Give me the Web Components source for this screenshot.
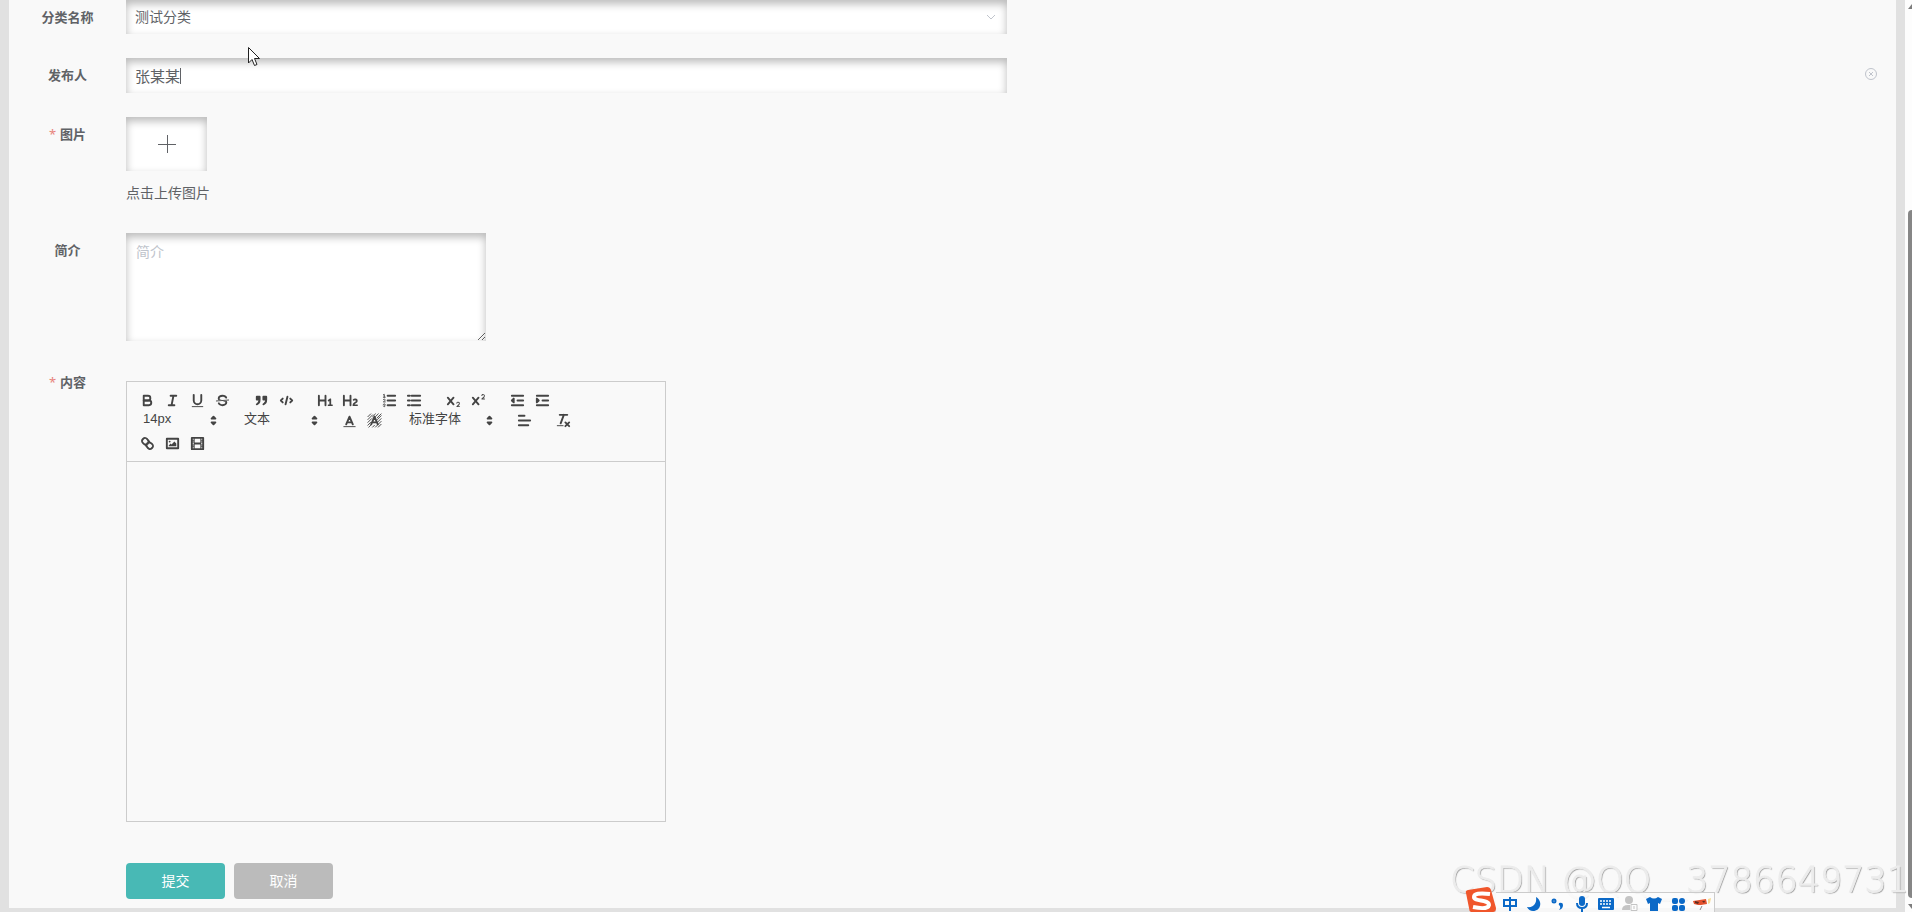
<!DOCTYPE html>
<html lang="zh-CN">
<head>
<meta charset="utf-8">
<title>发布</title>
<style>
	body{
		margin: 0;
		background: #e1e1e1;
		color: #606266;
		font: 14px/20px "Noto Sans", "Noto Sans CJK SC", sans-serif;
		overflow: hidden;
	}
</style>
</head>
<body>

<app-page>
	<select-row label="分类名称" value="测试分类"></select-row>
	<text-row label="发布人" value="张某某"></text-row>
	<upload-row label="图片" required tip="点击上传图片"></upload-row>
	<area-row label="简介"></area-row>
	<editor-row label="内容" required></editor-row>
	<form-actions>
		<action-button kind="primary">提交</action-button>
		<action-button>取消</action-button>
	</form-actions>
</app-page>

<water-mark>CSDN @QQ__3786649731</water-mark>
<ime-bar></ime-bar>
<mouse-pointer></mouse-pointer>

<script>

const box = `
	.box{
		box-sizing: border-box;
		border: 0;
		border-radius: 0;
		outline: 0;
		background-color: #fff;
		box-shadow: inset 0 4px 8px rgba(0,0,0,.28);
		color: #606266;
		font: inherit;
	}
`

class AppPage extends HTMLElement {

	constructor(){

		super()

		this.attachShadow({mode: 'open'}).innerHTML = `
			<style>
				:host{
					display: flex;
					min-height: 100vh;
				}
				main{
					flex: 1;
					margin: 0 9px 4px;
					padding-bottom: 9px;
					background: #f9f9f9;
				}
				form{
					display: flex;
					flex-direction: column;
					gap: 24px;
				}
			</style>
			<main><form><slot></slot></form></main>
			<scroll-rail></scroll-rail>
		`

	}

}

class ScrollRail extends HTMLElement {

	constructor(){

		super()

		this.attachShadow({mode: 'open'}).innerHTML = `
			<style>
				:host{
					display: flex;
					flex-direction: column;
					width: 7px;
					height: 100vh;
					overflow: hidden;
					background: #fdfdfd;
				}
				svg{
					display: block;
					flex: none;
					width: 14px;
					height: 14px;
					fill: #7d7d7d;
				}
				i{
					flex: 0 1 688px;
					margin: auto 0 0 3px;
					width: 8px;
					border-radius: 4px;
					background: #868686;
				}
			</style>
			<svg viewBox="0 0 14 14"><path d="M3 9L7 4L11 9Z"/></svg>
			<i></i>
			<svg viewBox="0 0 14 14"><path d="M3 6L7 11L11 6Z"/></svg>
		`

	}

}

// label on the left, the control of the subclass on the right
class FormRow extends HTMLElement {

	constructor(){

		super()

		this.shadow = this.attachShadow({mode: 'open'})

	}

	connectedCallback(){

		this.shadow.innerHTML = `
			<style>
				:host{
					display: flex;
					align-items: flex-start;
				}
				.name{
					flex: none;
					width: 117px;
					text-align: center;
					font-size: 13px;
					font-weight: 700;
					line-height: 34px;
				}
				.name b{
					margin-right: 4px;
					color: #e8837c;
					font-weight: 400;
				}
				${box}
				${this.css()}
			</style>
			<label class="name" for="control">${this.hasAttribute('required') ? '<b>*</b>' : ''}${this.getAttribute('label')}</label>
			${this.control()}
		`

	}

	css(){

		return ''

	}

	control(){

		return ''

	}

}

class SelectRow extends FormRow {

	css(){

		return `
			.wrap{
				display: grid;
				width: 881px;
				max-width: calc(100% - 117px);
				align-items: center;
			}
			select, svg{
				grid-area: 1 / 1;
			}
			select{
				appearance: none;
				width: 100%;
				height: 34px;
				padding: 0 30px 0 9px;
			}
			svg{
				justify-self: end;
				margin-right: 10px;
				width: 12px;
				height: 12px;
				fill: none;
				stroke: #c0c4cc;
				pointer-events: none;
			}
		`

	}

	control(){

		return `
			<div class="wrap">
				<select class="box" id="control"><option>${this.getAttribute('value')}</option></select>
				<svg viewBox="0 0 12 12"><path d="M2 4L6 8L10 4"/></svg>
			</div>
		`

	}

}

class TextRow extends FormRow {

	css(){

		return `
			input.box{
				width: 881px;
				height: 35px;
				padding: 0 9px;
				background: #fff linear-gradient(#606266, #606266) 54px 10px / 1px 16px no-repeat;
				font-size: 15px;
			}
			button{
				margin: 9px 18px 0 auto;
				padding: 0;
				border: 0;
				background: none;
			}
			svg{
				display: block;
				width: 14px;
				height: 14px;
				fill: none;
				stroke: #c0c4cc;
			}
		`

	}

	control(){

		return `
			<input class="box" id="control" type="text" value="${this.getAttribute('value')}">
			<button type="button" aria-label="清空">
				<svg viewBox="0 0 14 14"><circle cx="7" cy="7" r="5.5"/><path d="M5 5L9 9M9 5L5 9"/></svg>
			</button>
		`

	}

}

class UploadRow extends FormRow {

	css(){

		return `
			button{
				display: grid;
				place-items: center;
				width: 81px;
				height: 54px;
				padding: 0;
			}
			svg{
				width: 18px;
				height: 18px;
				stroke: #606266;
			}
			p{
				margin: 6px 0 0;
				line-height: 32px;
			}
		`

	}

	control(){

		return `
			<div>
				<button class="box" id="control" type="button">
					<svg viewBox="0 0 18 18"><path d="M9.500 0V18M0 9.500H18"/></svg>
				</button>
				<p>${this.getAttribute('tip')}</p>
			</div>
		`

	}

}

class AreaRow extends FormRow {

	css(){

		return `
			textarea{
				width: 360px;
				height: 108px;
				padding: 9px 10px;
				resize: both;
			}
			textarea::placeholder{
				color: #c0c4cc;
			}
		`

	}

	control(){

		return `<textarea class="box" id="control" placeholder="${this.getAttribute('label')}"></textarea>`

	}

}

const two = 'M15.5,15H13.861a3.858,3.858,0,0,0,1.914-2.975,1.8,1.8,0,0,0-1.6-1.751A1.921,1.921,0,0,0,12.021,11.7a0.5,0.5,0,1,0,.957.291h0a0.914,0.914,0,0,1,1.053-.725,0.81,0.81,0,0,1,.744.762c0,1.076-1.17,1.87-1.94,2.431A1.456,1.456,0,0,0,12,15.5a0.5,0.5,0,0,0,.5.5h3A0.5,0.5,0,0,0,15.500,15Z'

const cross = 'M9.65,5.241a1,1,0,0,0-1.409.108L6,7.964,3.759,5.349A1,1,0,0,0,2.192,6.592Q2.215,6.621,2.241,6.649L4.684,9.5,2.241,12.35A1,1,0,0,0,3.71,13.707q0.026-.028.049-0.057L6,11.036,8.241,13.65a1,1,0,1,0,1.567-1.243Q9.785,12.378,9.759,12.35L7.316,9.5,9.759,6.651A1,1,0,0,0,9.65,5.241Z'

const icons = {
	bold: '<path d="M5,4H9.500A2.500,2.500,0,0,1,9.500,9H5Z"/><path d="M5,9h5.500A2.500,2.500,0,0,1,10.500,14H5Z"/>',
	italic: '<path d="M7,4H13M5,14H11M8,14L10,4"/>',
	underline: '<path d="M5,3V9a4,4,0,0,0,8,0V3"/><rect class="f" x="3" y="15" width="12" height="1"/>',
	strike: '<path class="t" d="M15.500,8.500L2.500,9.500"/><path class="f" d="M9.007,8C6.542,7.791,6,7.519,6,6.5,6,5.792,7.283,5,9,5c1.571,0,2.765.679,2.969,1.309a1,1,0,0,0,1.9-.617C13.356,4.106,11.354,3,9,3,6.2,3,4,4.538,4,6.5a3.2,3.2,0,0,0,.5,1.843Z"/><path class="f" d="M8.984,10C11.457,10.208,12,10.479,12,11.5c0,0.708-1.283,1.5-3,1.5-1.571,0-2.765-.679-2.969-1.309a1,1,0,1,0-1.9.617C4.644,13.894,6.646,15,9,15c2.8,0,5-1.538,5-3.5a3.2,3.2,0,0,0-.5-1.843Z"/>',
	quote: '<path class="s" d="M4,5H7V8H4ZM11,5H14V8H11ZM7,8c0,4.031-3,5-3,5M14,8c0,4.031-3,5-3,5"/>',
	code: '<path d="M5,7L3,9L5,11M13,7L15,9L13,11M10,5L8,13"/>',
	h1: '<path class="f" d="M10,4V14a1,1,0,0,1-2,0V10H3v4a1,1,0,0,1-2,0V4A1,1,0,0,1,3,4V8H8V4a1,1,0,0,1,2,0Zm6.068,9.209H14.99V7.599a.541.541,0,0,0-.605-.605h-.627a1.011,1.011,0,0,0-.748.297L11.645,8.566a.544.544,0,0,0-.022.858l.286.308a.539.539,0,0,0,.847.033l.099-.088a1.214,1.214,0,0,0,.242-.353h.022s-.011.309-.011.605V13.209H12.041a.541.541,0,0,0-.605.605v.439a.541.541,0,0,0,.605.605h4.027a.541.541,0,0,0,.605-.605v-.439A.541.541,0,0,0,16.068,13.209Z"/>',
	h2: '<path class="f" d="M16.740,13.814v.439a.541.541,0,0,1-.605.605H11.855a.584.584,0,0,1-.649-.605V14.013c0-2.905,3.399-3.422,3.399-4.555a.777.777,0,0,0-.847-.781,1.177,1.177,0,0,0-.836.385c-.275.264-.561.374-.858.132l-.429-.341c-.308-.242-.385-.518-.154-.814a2.972,2.972,0,0,1,2.454-1.177,2.454,2.454,0,0,1,2.684,2.409c0,2.453-3.179,2.927-3.278,3.938h2.794A.541.541,0,0,1,16.740,13.814ZM9,3A1,1,0,0,0,8,4V8H3V4A1,1,0,0,0,1,4V14a1,1,0,0,0,2,0V10H8v4a1,1,0,0,0,2,0V4A1,1,0,0,0,9,3Z"/>',
	ordered: '<path d="M7,4H15M7,9H15M7,14H15"/><path class="t" d="M2.500,5.500H4.500M3.500,5.500V2.500L2.500,3M4.500,10.500h-2c0-.234,1.850-1.076,1.850-2.234A.959.959,0,0,0,2.500,8.156M2.500,14.846a.959.959,0,0,0,1.850-.109A.7.7,0,0,0,3.750,14a.688.688,0,0,0,.6-.736,.959.959,0,0,0-1.850-.109"/>',
	bullet: '<path d="M6,4H15M6,9H15M6,14H15M2,4H4M2,9H4M2,14H4"/>',
	sub: `<path class="f" d="${two}"/><path class="f" d="${cross}"/>`,
	super: `<path class="f" transform="translate(0 -8)" d="${two}"/><path class="f" d="${cross}"/>`,
	outdent: '<path d="M3,14H15M3,4H15M9,9H15"/><path class="s" d="M5,7V11L3,9Z"/>',
	indent: '<path d="M3,14H15M3,4H15M9,9H15"/><path class="s" d="M3,7V11L5,9Z"/>',
	color: '<path class="t" d="M3,15.500H15"/><path d="M5.500,13L9,5L12.500,13M11.630,11H6.380"/>',
	back: '<path class="t" d="M2,5L5,2M2,8L7,3M2,11L6,7M2,14L5,11M3,16L6,13M7,16L9,14M10,16L16,10M13,16L16,13M12,11L16,7M12,8L16,4M10,5L13,2M12,6L16,2M7,5L10,2"/><path d="M5.500,13L9,5L12.500,13M11.630,11H6.380"/>',
	align: '<path d="M3,4H9M3,9H15M3,14H13"/>',
	clean: '<path d="M5,3H13M6,12L9.350,3M11,11L15,15M15,11L11,15"/><rect class="f" x="2" y="14" width="7" height="1"/>',
	link: '<path d="M7,11L11,7M8.9,4.577a3.476,3.476,0,0,1,.36,4.679A3.476,3.476,0,0,1,4.577,8.9C3.185,7.5,2.035,6.4,4.217,4.217S7.5,3.185,8.9,4.577ZM13.423,9.1a3.476,3.476,0,0,0-4.679-.36,3.476,3.476,0,0,0,.36,4.679c1.392,1.392,2.5,2.542,4.679.36S14.815,10.5,13.423,9.1Z"/>',
	image: '<rect x="3" y="4" width="12" height="10"/><circle class="f" cx="6" cy="7" r="1"/><path class="f" d="M5,12V11L7,9L8,10L11,7L13,9V12Z"/>',
	video: '<rect x="3" y="3" width="12" height="12"/><path class="f" d="M5,3H6V15H5ZM12,3H13V15H12ZM5,8H13V10H5ZM3,5H6V6H3ZM3,7H6V8H3ZM3,10H6V11H3ZM3,12H6V13H3ZM12,5H15V6H12ZM12,7H15V8H12ZM12,10H15V11H12ZM12,12H15V13H12Z"/>',
	updown: '<path class="s" d="M7,11H11L9,13ZM7,7H11L9,5Z"/>'
}

const toolStyle = `
	svg{
		display: block;
		width: 17px;
		height: 17px;
		fill: none;
		stroke: #444;
		stroke-width: 2;
		stroke-linecap: round;
		stroke-linejoin: round;
	}
	.f{
		fill: #444;
		stroke: none;
	}
	.s{
		fill: #444;
	}
	.t{
		stroke-width: 1;
	}
`

class ToolButton extends HTMLElement {

	constructor(){

		super()

		this.shadow = this.attachShadow({mode: 'open'})

	}

	connectedCallback(){

		const name = this.getAttribute('icon')

		this.shadow.innerHTML = `
			<style>
				:host{
					display: block;
				}
				button{
					display: grid;
					place-items: center;
					width: 25px;
					height: 18px;
					padding: 0;
					border: 0;
					background: none;
				}
				${toolStyle}
			</style>
			<button type="button" aria-label="${name}"><svg viewBox="0 0 18 18">${icons[name]}</svg></button>
		`

	}

}

class ToolPicker extends HTMLElement {

	constructor(){

		super()

		this.shadow = this.attachShadow({mode: 'open'})

	}

	connectedCallback(){

		this.shadow.innerHTML = `
			<style>
				:host{
					display: grid;
					align-items: center;
					width: 87px;
				}
				:host([wide]){
					width: 97px;
				}
				select, svg{
					grid-area: 1 / 1;
				}
				select{
					appearance: none;
					width: 100%;
					height: 18px;
					padding: 0 20px 2px 8px;
					border: 0;
					background: none;
					color: #444;
					font: 13px/16px "Liberation Sans", "Noto Sans CJK SC", sans-serif;
				}
				${toolStyle}
				svg{
					justify-self: end;
					pointer-events: none;
				}
			</style>
			<select aria-label="${this.getAttribute('name')}"><option>${this.getAttribute('value')}</option></select>
			<svg viewBox="0 0 18 18">${icons.updown}</svg>
		`

	}

}

class EditorRow extends FormRow {

	css(){

		return `
			:host{
				margin-bottom: 17px;
			}
			.editor{
				box-sizing: border-box;
				width: 540px;
				margin-top: 16px;
				border: 1px solid #ccc;
			}
			.bar{
				display: grid;
				grid-template-rows: 22px 18px 28px;
				align-items: center;
				padding: 7px 8px 4px;
				border-bottom: 1px solid #ccc;
			}
			.bar div{
				display: flex;
				gap: 14px;
			}
			.bar span{
				display: flex;
			}
			.text{
				height: 359px;
				outline: 0;
			}
		`

	}

	group(...names){

		return `<span>${names.map(n => `<tool-button icon="${n}"></tool-button>`).join('')}</span>`

	}

	control(){

		return `
			<div class="editor">
				<div class="bar">
					<div>
						${this.group('bold', 'italic', 'underline', 'strike')}
						${this.group('quote', 'code')}
						${this.group('h1', 'h2')}
						${this.group('ordered', 'bullet')}
						${this.group('sub', 'super')}
						${this.group('outdent', 'indent')}
					</div>
					<div>
						<tool-picker name="字号" value="14px"></tool-picker>
						<tool-picker name="标题" value="文本"></tool-picker>
						${this.group('color', 'back')}
						<tool-picker name="字体" value="标准字体" wide></tool-picker>
						${this.group('align')}
						${this.group('clean')}
					</div>
					<div>${this.group('link', 'image', 'video')}</div>
				</div>
				<div class="text" id="control" contenteditable="true" role="textbox" aria-label="${this.getAttribute('label')}"></div>
			</div>
		`

	}

}

class FormActions extends HTMLElement {

	constructor(){

		super()

		this.attachShadow({mode: 'open'}).innerHTML = `
			<style>
				:host{
					display: flex;
					gap: 9px;
					padding-left: 117px;
				}
			</style>
			<slot></slot>
		`

	}

}

class ActionButton extends HTMLElement {

	constructor(){

		super()

		this.attachShadow({mode: 'open'}).innerHTML = `
			<style>
				:host{
					display: block;
				}
				button{
					width: 99px;
					height: 36px;
					padding: 0;
					border: 0;
					border-radius: 4px;
					background: #bbb;
					color: #fff;
					font: inherit;
				}
				:host([kind=primary]) button{
					background: #48b9b5;
				}
			</style>
			<button type="button"><slot></slot></button>
		`

	}

}

class WaterMark extends HTMLElement {

	constructor(){

		super()

		this.attachShadow({mode: 'open'}).innerHTML = `
			<style>
				:host{
					position: fixed;
					right: 3px;
					bottom: 11px;
					z-index: 3;
					color: #ececec;
					font: 200 35px/42px "DejaVu Sans Light", "DejaVu Sans", sans-serif;
					-webkit-text-stroke: 1px #ececec;
					text-shadow: 1px 1px 1px rgba(0,0,0,.4);
					white-space: nowrap;
					pointer-events: none;
				}
			</style>
			<slot></slot>
		`

	}

}

class ImeBar extends HTMLElement {

	constructor(){

		super()

		this.attachShadow({mode: 'open'}).innerHTML = `
			<style>
				:host{
					position: fixed;
					right: 197px;
					bottom: 0;
					z-index: 4;
					display: flex;
					align-items: flex-end;
				}
				div{
					display: flex;
					align-items: center;
					height: 20px;
					padding: 3px 0 0 2px;
					box-sizing: border-box;
					border: solid #ccc;
					border-width: 1px 1px 0 0;
					background: rgba(252,252,252,.8);
				}
				svg{
					display: block;
					width: 24px;
					height: 16px;
					fill: #0b69c7;
				}
				.logo{
					width: 31px;
					height: 25px;
				}
				.l{
					fill: none;
					stroke: #0b69c7;
					stroke-width: 2;
				}
			</style>
			<svg class="logo" viewBox="0 0 31 25">
				<path fill="#f0562b" d="M1 6Q0 4 3 3L22 0Q25 0 26 3L31 21Q31 25 28 25H6Q4 24 4 21Z"/>
				<path fill="none" stroke="#fff" stroke-width="4" d="M25 7Q9 5 9 10C9 15 24 12 24 18Q23 23 8 20"/>
			</svg>
			<div>
				<svg viewBox="0 0 24 16"><path class="l" d="M6 4H18V10H6ZM12 1V15"/></svg>
				<svg viewBox="0 0 24 16"><path d="M14 1C21 5 19 15 11 15Q7 15 5 11C12 12 15 7 14 1Z"/></svg>
				<svg viewBox="0 0 24 16"><circle class="l" cx="8" cy="5" r="1.500"/><path d="M13 7Q17 6 17 9Q17 13 13 14Q15 12 14 10Q12 9 13 7Z"/></svg>
				<svg viewBox="0 0 24 16"><rect x="9" y="0" width="6" height="10" rx="3"/><path class="l" d="M7 7Q7 12 12 12Q17 12 17 7M12 12V16"/></svg>
				<svg viewBox="0 0 24 16"><rect x="4" y="2" width="16" height="12" rx="1"/><path stroke="#fff" stroke-width="1.500" stroke-dasharray="2 1" d="M6 5H18M6 8H18"/><path stroke="#fff" stroke-width="1.500" d="M8 11.500H16"/></svg>
				<svg viewBox="0 0 24 16"><g fill="#c4c4c4"><circle cx="11" cy="4" r="4"/><path d="M4 14Q4 9 10 9H12V14Z"/><path fill="#fcfcfc" stroke="#c4c4c4" d="M13 8.500H19V14.500H13ZM16 10V13"/></g></svg>
				<svg viewBox="0 0 24 16"><path d="M8 1Q12 4 16 1L20 3L18 8L16 7V15H8V7L6 8L4 3Z"/></svg>
				<svg viewBox="0 0 24 16"><rect x="6" y="2" width="6" height="6" rx="2"/><circle cx="16" cy="5" r="3"/><rect x="6" y="9" width="6" height="6" rx="2"/><rect x="13" y="9" width="6" height="6" rx="2"/></svg>
				<svg viewBox="0 0 24 16"><path fill="#e2502c" d="M3 5L16 3L17 8L11 9L8 9L4 8Z"/><path fill="#5c2d22" d="M5 5L9 6L8 8L5 7ZM12 5L15 5L14 7Z"/><path fill="#f7dc95" d="M18 3L21 2L20 7L18 8Z"/><path fill="none" stroke="#888" d="M12 10L10 14"/></svg>
			</div>
		`

	}

}

class MousePointer extends HTMLElement {

	constructor(){

		super()

		this.attachShadow({mode: 'open'}).innerHTML = `
			<style>
				:host{
					position: fixed;
					left: 248px;
					top: 46px;
					pointer-events: none;
				}
				svg{
					display: block;
					width: 13px;
					height: 21px;
				}
			</style>
			<svg viewBox="0 0 13 21"><path fill="#fff" stroke="#222" d="M.5 1.500V17L4 13.500L6.500 19.500L9 18.500L6.500 12.500H11.500Z"/></svg>
		`

	}

}

customElements.define('tool-button', ToolButton)
customElements.define('tool-picker', ToolPicker)
customElements.define('scroll-rail', ScrollRail)
customElements.define('app-page', AppPage)
customElements.define('select-row', SelectRow)
customElements.define('text-row', TextRow)
customElements.define('upload-row', UploadRow)
customElements.define('area-row', AreaRow)
customElements.define('editor-row', EditorRow)
customElements.define('form-actions', FormActions)
customElements.define('action-button', ActionButton)
customElements.define('water-mark', WaterMark)
customElements.define('ime-bar', ImeBar)
customElements.define('mouse-pointer', MousePointer)

</script>
</body>
</html>
